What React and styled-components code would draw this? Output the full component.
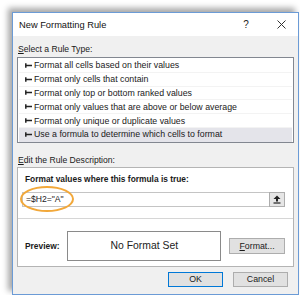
import styled, { createGlobalStyle } from "styled-components"

const GlobalStyle = createGlobalStyle`
    body {
        margin: 0;
        background: #ffffff;
        font-family: "Liberation Sans", Arial, sans-serif;
        color: #1a1a1a;
    }
`

const Page = styled.div`
    width: 300px;
    height: 295px;
    overflow: hidden;
    padding: 12px 0 0 12px;
    box-sizing: border-box;
`

const Dialog = styled.div`
    width: 287px;
    height: 283px;
    box-sizing: border-box;
    border: 1px solid #6b9bd6;
    background: #f0f0f0;
    box-shadow: -4px -4px 6px rgba(0, 0, 0, 0.35);
    display: flex;
    flex-direction: column;
`

const TitleBar = styled.div`
    height: 23px;
    background: #ffffff;
    display: flex;
    align-items: center;
    padding: 0 7px 0 6px;
`

const Title = styled.span`
    flex: 1;
    font-size: 9.3px;
    color: #111;
`

const TitleButton = styled.span`
    width: ${props => props.w}px;
    margin-left: ${props => props.ml || 0}px;
    display: flex;
    justify-content: center;
    align-items: center;
    font-size: 10px;
    color: #222;
`

const Body = styled.div`
    flex: 1;
    padding: 6px 4px 0 4px;
    display: flex;
    flex-direction: column;
`

const Label = styled.div`
    font-size: 8.6px;
    line-height: 14px;
    height: 14px;
    padding-left: 1px;
    margin-top: ${props => props.mt || 0}px;
`

const Key = styled.span`
    text-decoration: underline;
`

const ListBox = styled.div`
    margin-top: 1px;
    background: #ffffff;
    border: 1px solid #828790;
    padding: 1px 1px 0 1px;
`

const Row = styled.div`
    height: 13.8px;
    display: flex;
    align-items: center;
    gap: 2px;
    padding-left: 6px;
    font-size: 8.8px;
    box-sizing: border-box;
    border-bottom: 1px solid ${props => props.selected ? "#e4e4ea" : "#f3f3f3"};
    background: ${props => props.selected ? "#e4e4ea" : "transparent"};
`

const GroupBox = styled.div`
    background: #ffffff;
    border: 1px solid #b4b4b4;
    display: flex;
    flex-direction: column;
`

const Upper = styled.div`
    padding: 4px 8px 0 4px;
    height: 51px;
    box-sizing: border-box;
    border-bottom: 1px solid #d6d6d6;
`

const BoldLabel = styled.div`
    font-size: 8.4px;
    font-weight: 700;
    line-height: 14px;
    padding-left: 3px;
`

const FormulaRow = styled.div`
    position: relative;
    margin-top: 6px;
    display: flex;
    height: 15px;
`

const FormulaInput = styled.div`
    flex: 1;
    border: 1px solid #c4c4c4;
    border-right: none;
    font-size: 8.6px;
    line-height: 13px;
    padding-left: 3px;
`

const CollapseButton = styled.div`
    width: 16px;
    box-sizing: border-box;
    border: 1px solid #adadad;
    background: #e6e6e6;
    display: flex;
    align-items: center;
    justify-content: center;
`

const Highlight = styled.span`
    position: absolute;
    left: -2px;
    top: -6px;
    width: 54px;
    height: 26px;
    box-sizing: border-box;
    border: 2px solid #f2a83a;
    border-radius: 50%;
    pointer-events: none;
`

const Lower = styled.div`
    height: 47px;
    box-sizing: border-box;
    padding: 12px 8px 5px 7px;
    display: flex;
    align-items: center;
    gap: 8px;
`

const PreviewLabel = styled.span`
    font-size: 8.4px;
    font-weight: 700;
`

const PreviewBox = styled.div`
    width: 154px;
    height: 30px;
    box-sizing: border-box;
    border: 1px solid #8a8a8a;
    display: flex;
    align-items: center;
    justify-content: center;
    font-size: 10.4px;
    color: #222;
`

const Button = styled.div`
    width: ${props => props.w}px;
    height: ${props => props.h || 15}px;
    box-sizing: border-box;
    border: 1px solid ${props => props.primary ? "#0078d7" : "#adadad"};
    background: #e1e1e1;
    display: flex;
    align-items: center;
    justify-content: center;
    font-size: 8.8px;
    color: #1a1a1a;
`

const Footer = styled.div`
    display: flex;
    justify-content: flex-end;
    gap: 10px;
    padding: 5px 6px 0 0;
`

const Arrow = () => (
    <svg width="7" height="5" viewBox="0 0 7 5">
        <path d="M0.8 0.3V4.7M0.8 2.5H7" stroke="#222" strokeWidth="1.5" fill="none" />
    </svg>
)

const UpIcon = () => (
    <svg width="8" height="9" viewBox="0 0 8 9">
        <path d="M4 0.5L7.5 4H5V6.5H3V4H0.5Z" fill="#222" />
        <path d="M0.5 8H7.5" stroke="#222" strokeWidth="1.2" />
    </svg>
)

const CloseIcon = () => (
    <svg width="9" height="9" viewBox="0 0 9 9">
        <path d="M0.5 0.5L8.5 8.5M8.5 0.5L0.5 8.5" stroke="#333" strokeWidth="1" />
    </svg>
)

const rules = [
    "Format all cells based on their values",
    "Format only cells that contain",
    "Format only top or bottom ranked values",
    "Format only values that are above or below average",
    "Format only unique or duplicate values",
    "Use a formula to determine which cells to format",
]

const App = () => {
  return (
    <Page>
        <GlobalStyle/>
        <Dialog>
            <TitleBar>
                <Title>New Formatting Rule</Title>
                <TitleButton w={14}>?</TitleButton>
                <TitleButton w={20} ml={18}><CloseIcon/></TitleButton>
            </TitleBar>
            <Body>
                <Label><Key>S</Key>elect a Rule Type:</Label>
                <ListBox>
                    {rules.map((r, i) => (
                        <Row key={r} selected={i === rules.length - 1}>
                            <Arrow/>
                            <span>{r}</span>
                        </Row>
                    ))}
                </ListBox>
                <Label mt={10}><Key>E</Key>dit the Rule Description:</Label>
                <GroupBox>
                    <Upper>
                        <BoldLabel>Format values where this formula is true:</BoldLabel>
                        <FormulaRow>
                            <FormulaInput>=$H2="A"</FormulaInput>
                            <CollapseButton><UpIcon/></CollapseButton>
                            <Highlight/>
                        </FormulaRow>
                    </Upper>
                    <Lower>
                        <PreviewLabel>Preview:</PreviewLabel>
                        <PreviewBox>No Format Set</PreviewBox>
                        <Button w={56} h={16}><Key>F</Key>ormat...</Button>
                    </Lower>
                </GroupBox>
                <Footer>
                    <Button w={55} primary>OK</Button>
                    <Button w={55}>Cancel</Button>
                </Footer>
            </Body>
        </Dialog>
    </Page>
  )
}

export default App
